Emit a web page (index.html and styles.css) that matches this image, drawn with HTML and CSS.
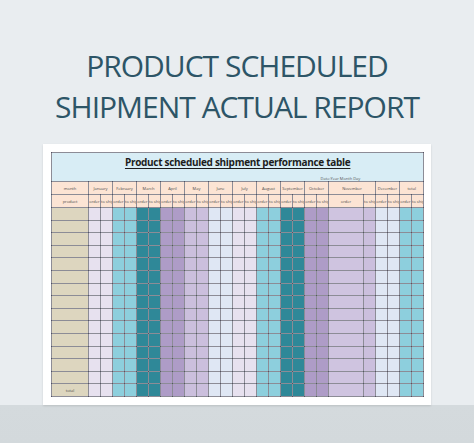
FILE: index.html
```html
<!DOCTYPE html>
<html>
<head>
<meta charset="utf-8">
<link rel="stylesheet" href="styles.css">
</head>
<body>
<h1 class="heading">PRODUCT SCHEDULED<br>SHIPMENT ACTUAL REPORT</h1>
<div class="paper">
<table class="sheet">
<colgroup>
<col class="w-month c-beige">
<col class="w-sub c-lav"><col class="w-sub c-lav">
<col class="w-sub c-sky"><col class="w-sub c-sky">
<col class="w-sub c-teal"><col class="w-sub c-teal">
<col class="w-sub c-purple"><col class="w-sub c-purple">
<col class="w-sub c-lilac"><col class="w-sub c-lilac">
<col class="w-sub c-ice"><col class="w-sub c-ice">
<col class="w-sub c-lav"><col class="w-sub c-lav">
<col class="w-sub c-sky"><col class="w-sub c-sky">
<col class="w-sub c-teal"><col class="w-sub c-teal">
<col class="w-sub c-purple"><col class="w-sub c-purple">
<col class="w-nov c-nov"><col class="w-sub c-lilac">
<col class="w-sub c-ice"><col class="w-sub c-ice">
<col class="w-sub c-sky"><col class="w-sub c-sky">
</colgroup>
<thead>
<tr class="band"><th colspan="27"><div class="title">Product scheduled shipment performance table</div><div class="date">Date:Year Month Day</div></th></tr>
<tr class="head"><td>month</td><td colspan="2">January</td><td colspan="2">February</td><td colspan="2">March</td><td colspan="2">April</td><td colspan="2">May</td><td colspan="2">June</td><td colspan="2">July</td><td colspan="2">August</td><td colspan="2">September</td><td colspan="2">October</td><td colspan="2">November</td><td colspan="2">December</td><td colspan="2">total</td></tr>
<tr class="head"><td>product</td><td>order</td><td>to ship</td><td>order</td><td>to ship</td><td>order</td><td>to ship</td><td>order</td><td>to ship</td><td>order</td><td>to ship</td><td>order</td><td>to ship</td><td>order</td><td>to ship</td><td>order</td><td>to ship</td><td>order</td><td>to ship</td><td>order</td><td>to ship</td><td>order</td><td>to ship</td><td>order</td><td>to ship</td><td>order</td><td>to ship</td></tr>
</thead>
<tbody>
<tr><td></td><td></td><td></td><td></td><td></td><td></td><td></td><td></td><td></td><td></td><td></td><td></td><td></td><td></td><td></td><td></td><td></td><td></td><td></td><td></td><td></td><td></td><td></td><td></td><td></td><td></td><td></td></tr>
<tr><td></td><td></td><td></td><td></td><td></td><td></td><td></td><td></td><td></td><td></td><td></td><td></td><td></td><td></td><td></td><td></td><td></td><td></td><td></td><td></td><td></td><td></td><td></td><td></td><td></td><td></td><td></td></tr>
<tr><td></td><td></td><td></td><td></td><td></td><td></td><td></td><td></td><td></td><td></td><td></td><td></td><td></td><td></td><td></td><td></td><td></td><td></td><td></td><td></td><td></td><td></td><td></td><td></td><td></td><td></td><td></td></tr>
<tr><td></td><td></td><td></td><td></td><td></td><td></td><td></td><td></td><td></td><td></td><td></td><td></td><td></td><td></td><td></td><td></td><td></td><td></td><td></td><td></td><td></td><td></td><td></td><td></td><td></td><td></td><td></td></tr>
<tr><td></td><td></td><td></td><td></td><td></td><td></td><td></td><td></td><td></td><td></td><td></td><td></td><td></td><td></td><td></td><td></td><td></td><td></td><td></td><td></td><td></td><td></td><td></td><td></td><td></td><td></td><td></td></tr>
<tr><td></td><td></td><td></td><td></td><td></td><td></td><td></td><td></td><td></td><td></td><td></td><td></td><td></td><td></td><td></td><td></td><td></td><td></td><td></td><td></td><td></td><td></td><td></td><td></td><td></td><td></td><td></td></tr>
<tr><td></td><td></td><td></td><td></td><td></td><td></td><td></td><td></td><td></td><td></td><td></td><td></td><td></td><td></td><td></td><td></td><td></td><td></td><td></td><td></td><td></td><td></td><td></td><td></td><td></td><td></td><td></td></tr>
<tr><td></td><td></td><td></td><td></td><td></td><td></td><td></td><td></td><td></td><td></td><td></td><td></td><td></td><td></td><td></td><td></td><td></td><td></td><td></td><td></td><td></td><td></td><td></td><td></td><td></td><td></td><td></td></tr>
<tr><td></td><td></td><td></td><td></td><td></td><td></td><td></td><td></td><td></td><td></td><td></td><td></td><td></td><td></td><td></td><td></td><td></td><td></td><td></td><td></td><td></td><td></td><td></td><td></td><td></td><td></td><td></td></tr>
<tr><td></td><td></td><td></td><td></td><td></td><td></td><td></td><td></td><td></td><td></td><td></td><td></td><td></td><td></td><td></td><td></td><td></td><td></td><td></td><td></td><td></td><td></td><td></td><td></td><td></td><td></td><td></td></tr>
<tr><td></td><td></td><td></td><td></td><td></td><td></td><td></td><td></td><td></td><td></td><td></td><td></td><td></td><td></td><td></td><td></td><td></td><td></td><td></td><td></td><td></td><td></td><td></td><td></td><td></td><td></td><td></td></tr>
<tr><td></td><td></td><td></td><td></td><td></td><td></td><td></td><td></td><td></td><td></td><td></td><td></td><td></td><td></td><td></td><td></td><td></td><td></td><td></td><td></td><td></td><td></td><td></td><td></td><td></td><td></td><td></td></tr>
<tr><td></td><td></td><td></td><td></td><td></td><td></td><td></td><td></td><td></td><td></td><td></td><td></td><td></td><td></td><td></td><td></td><td></td><td></td><td></td><td></td><td></td><td></td><td></td><td></td><td></td><td></td><td></td></tr>
<tr><td></td><td></td><td></td><td></td><td></td><td></td><td></td><td></td><td></td><td></td><td></td><td></td><td></td><td></td><td></td><td></td><td></td><td></td><td></td><td></td><td></td><td></td><td></td><td></td><td></td><td></td><td></td></tr>
<tr class="total"><td>total</td><td></td><td></td><td></td><td></td><td></td><td></td><td></td><td></td><td></td><td></td><td></td><td></td><td></td><td></td><td></td><td></td><td></td><td></td><td></td><td></td><td></td><td></td><td></td><td></td><td></td><td></td></tr>
</tbody>
</table>
</div>
</body>
</html>
```

FILE: styles.css
```css
html, body {
  margin: 0;
  padding: 0;
}
body {
  width: 474px;
  height: 443px;
  overflow: hidden;
  background: linear-gradient(#e9edf0 0, #e9edf0 405px, #d4dadd 405px, #d3d9dc 443px);
  font-family: "Open Sans", "Liberation Sans", sans-serif;
}
.heading {
  margin: 0;
  padding-top: 45px;
  height: 82px;
  text-align: center;
  font-weight: 400;
  font-size: 30px;
  line-height: 41px;
  letter-spacing: -1px;
  color: #2d5567;
}
.paper {
  margin: 17px 0 0 43px;
  width: 372px;
  padding: 8px;
  background: #ffffff;
  box-shadow: 0 1px 2px rgba(0, 0, 0, 0.12);
}
.sheet {
  width: 372px;
  border-collapse: collapse;
  table-layout: fixed;
  border: 1px solid #55555f;
}
.sheet td, .sheet th {
  padding: 0;
  border: 1px solid rgba(25, 25, 45, 0.5);
  font-size: 4px;
  font-weight: 400;
  color: #4a4a4a;
  text-align: center;
  white-space: nowrap;
  overflow: hidden;
  line-height: 5px;
}
.w-month { width: 37px; }
.w-sub { width: 12px; }
.w-nov { width: 35px; }
.c-beige { background: #ddd6bf; }
.c-lav { background: #e7e1ef; }
.c-sky { background: #8dcfdd; }
.c-teal { background: #2f8898; }
.c-purple { background: #ae9cc7; }
.c-lilac { background: #cbbfdd; }
.c-ice { background: #dfe7f4; }
.c-nov { background: #cfc4e0; }
.band th {
  height: 28px;
  background: #d8edf5;
  vertical-align: top;
}
.title {
  margin-top: 3px;
  font-size: 10px;
  line-height: 12px;
  font-weight: 700;
  letter-spacing: -0.3px;
  color: #1d1d1d;
  text-decoration: underline;
  text-underline-offset: 2px;
}
.date {
  margin-top: 8px;
  padding-right: 63px;
  text-align: right;
  font-size: 4px;
  line-height: 5px;
  color: #555;
}
.head td {
  height: 12px;
  background: #fce4d4;
}
tbody tr {
  height: 12.6px;
}
.total td {
  vertical-align: middle;
}
```
